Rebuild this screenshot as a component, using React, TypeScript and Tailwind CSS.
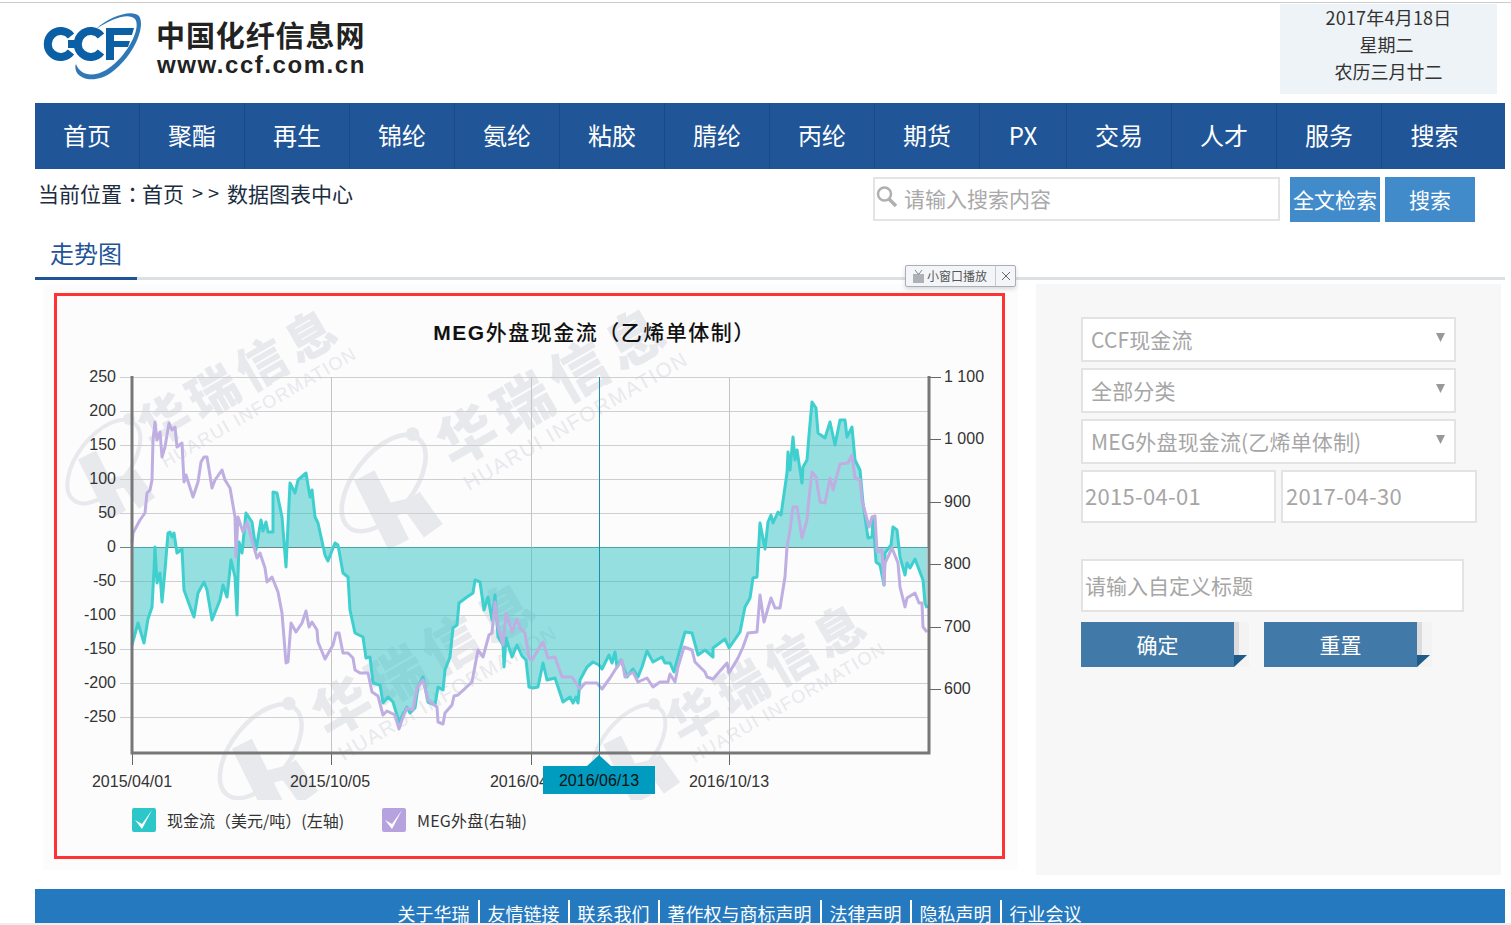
const TEAL = "132,645 138,623 144,643 148,619 152,607 154,570 155,547 157,583 160,573 162,602 165,570 168,533 170,532 172,537 174,533 177,553 182,549 184,590 192,612 194,617 198,593 204,582 207,590 212,620 220,600 223,585 227,597 231,560 235,577 237,615 238,577 239,542 242,553 246,513 252,522 256,550 261,520 263,531 266,522 268,532 273,532 273,492 277,493 282,517 286,567 290,483 295,493 298,480 306,473 310,497 312,490 315,517 318,523 325,555 328,561 335,543 338,545 343,573 348,577 350,610 355,633 363,637 366,658 370,657 373,683 380,685 383,703 388,697 393,702 399,722 407,707 410,713 415,708 418,687 423,677 428,702 435,705 438,687 443,690 445,670 450,657 453,628 457,625 459,603 467,597 473,593 475,580 480,582 484,610 488,597 492,620 495,595 498,637 503,645 504,667 506,638 512,657 517,645 522,656 526,660 529,687 533,688 538,687 543,663 547,680 555,678 563,702 570,697 573,703 576,697 578,703 580,680 587,667 593,662 599,665 602,669 609,655 612,663 615,652 617,667 621,660 627,677 633,669 638,677 642,667 647,651 653,662 662,657 665,663 670,663 674,672 678,657 685,632 692,633 698,655 705,650 713,657 713,648 725,639 729,648 740,632 745,607 750,598 753,578 757,577 760,523 765,549 768,522 771,515 773,523 778,512 781,515 787,473 788,452 790,470 793,437 795,460 797,450 802,483 803,467 807,460 809,435 812,402 816,408 818,433 825,438 830,422 835,445 840,420 845,420 847,437 852,427 855,460 860,470 863,503 868,538 872,537 873,517 876,562 880,565 884,585 885,553 891,545 893,527 897,530 900,557 905,575 907,563 910,568 915,559 923,580 925,603 927,608";
const PURPLE = "132,543 133,533 140,520 145,513 147,493 150,490 152,480 153,440 155,422 157,440 160,432 162,457 165,447 169,423 172,430 175,427 177,447 182,443 184,482 186,475 193,497 198,482 201,462 204,457 207,457 212,488 215,480 222,470 225,480 230,488 235,517 236,557 238,517 243,532 247,522 252,540 257,558 260,553 265,568 267,582 272,577 278,592 282,613 286,663 288,662 291,623 296,632 302,623 306,611 309,627 312,622 317,630 318,642 325,659 333,645 336,633 339,633 343,653 348,653 353,658 355,670 360,673 368,673 372,692 378,696 383,715 387,711 395,715 399,729 403,717 407,708 413,710 417,688 423,680 428,700 437,707 438,722 443,724 445,713 452,705 454,696 458,695 472,682 478,650 483,657 489,635 492,633 495,602 498,627 503,645 506,613 512,632 517,619 520,628 525,633 529,658 532,660 538,650 543,642 548,658 555,657 562,677 572,677 580,689 585,683 597,683 602,689 610,678 615,670 622,660 625,677 633,672 638,682 647,678 653,687 660,682 668,682 670,674 675,682 678,667 684,647 692,650 695,662 705,672 707,677 713,679 727,663 729,673 738,658 743,647 748,633 757,632 760,595 764,622 771,598 775,608 780,608 785,577 787,547 790,530 793,507 797,507 802,538 807,520 809,498 812,472 816,477 820,502 825,503 830,478 833,490 840,464 848,463 852,455 855,478 860,480 862,500 869,527 872,517 875,516 877,552 882,550 884,585 885,563 892,548 898,563 900,587 905,607 907,598 915,593 919,603 922,603 923,627 927,632";

const NAV = ["首页", "聚酯", "再生", "锦纶", "氨纶", "粘胶", "腈纶", "丙纶", "期货", "PX", "交易", "人才", "服务", "搜索"];
const LEFT = [250, 200, 150, 100, 50, 0, -50, -100, -150, -200, -250];
const RIGHT: [string, number][] = [["1 100", 377], ["1 000", 439], ["900", 502], ["800", 564], ["700", 627], ["600", 689]];
const XS: [string, number, number][] = [["2015/04/01", 132, 132], ["2015/10/05", 331, 330], ["2016/04/08", 531, 530], ["2016/10/13", 729, 729]];
const FOOT = ["关于华瑞", "友情链接", "联系我们", "著作权与商标声明", "法律声明", "隐私声明", "行业会议"];
const CJK = "'Noto Sans CJK SC', sans-serif";

function Watermark({ x, y, s = 1, tx = 38, ty = -20 }: { x: number; y: number; s?: number; tx?: number; ty?: number }) {
  return (
    <g transform={`translate(${x} ${y}) scale(${s})`} fill="#e8e9ed" stroke="none">
      <g fill="none" stroke="#e8e9ed">
        <ellipse cx="-3" cy="-2" rx="26" ry="49" transform="rotate(38)" strokeWidth="4" />
        <path d="M-18 -10 L12 50" strokeWidth="20" />
        <path d="M22 10 L42 38" strokeWidth="20" />
        <path d="M-4 22 L28 14" strokeWidth="12" />
      </g>
      <circle cx="24" cy="-46" r="6" />
      <g transform={`translate(${tx} ${ty}) rotate(-30)`}>
        <text x="0" y="18" fontSize="50" fontWeight="900" letterSpacing="6" style={{ fontFamily: CJK }}>华瑞信息</text>
        <text x="2" y="42" fontSize="18" letterSpacing="1.3" style={{ fontFamily: "'Liberation Sans', sans-serif" }}>HUARUI INFORMATION</text>
      </g>
    </g>
  );
}

function Chart() {
  return (
    <svg className="block w-[944px] h-[504px]" viewBox="57 296 944 504" style={{ fontFamily: "'Liberation Sans', sans-serif" }}>
      <Watermark x={105} y={465} ty={-32} />
      <Watermark x={385} y={487} s={1.15} tx={50} ty={-32} />
      <Watermark x={262} y={755} s={1.12} tx={50} ty={-30} />
      <Watermark x={630} y={750} tx={42} ty={-22} />
      {LEFT.map((v, i) => {
        const y = 377.5 + i * 34;
        return (
          <g key={v}>
            <line x1="120" x2="929" y1={y} y2={y} stroke={v === 0 ? "#5f8c8e" : "#cfcfcf"} />
            <text x="116" y={y + 4} textAnchor="end" fontSize="16" fill="#333">{v}</text>
          </g>
        );
      })}
      {XS.map(([t, x, lx]) => (
        <g key={t}>
          <line x1={x + 0.5} x2={x + 0.5} y1="377" y2="765" stroke={x === 132 ? "#777" : "#c4c4c4"} />
          <line x1={x + 0.5} x2={x + 0.5} y1="753" y2="765" stroke="#666" />
          <text x={lx} y="787" textAnchor="middle" fontSize="16" fill="#333">{t}</text>
        </g>
      ))}
      <polygon points={`132,547 ${TEAL} 927,547`} fill="#2fc2c4" fillOpacity="0.5" />
      <polyline points={TEAL} fill="none" stroke="#3fcfcf" strokeWidth="3" strokeLinejoin="round" />
      <polyline points={PURPLE} fill="none" stroke="#bfaee2" strokeWidth="3" strokeLinejoin="round" />
      <line x1="599.5" x2="599.5" y1="377" y2="756" stroke="#1a8fac" />
      <path d="M132 376 V753 H929 V376" fill="none" stroke="#777" strokeWidth="3" />
      {RIGHT.map(([t, y]) => (
        <g key={t}>
          <line x1="930" x2="941" y1={y + 0.5} y2={y + 0.5} stroke="#666" />
          <text x="944" y={y + 5} fontSize="16" fill="#333">{t}</text>
        </g>
      ))}
      <rect x="543" y="766" width="112" height="28" fill="#009cc0" />
      <polygon points="587,766 599,755 611,766" fill="#009cc0" />
      <text x="599" y="786" textAnchor="middle" fontSize="16" fill="#111">2016/06/13</text>
    </svg>
  );
}

function Check({ color }: { color: string }) {
  return (
    <svg className="w-6 h-6" viewBox="0 0 24 24">
      <rect width="24" height="24" rx="2" fill={color} />
      <path d="M3 12 L10 21 L20 2 L10 16 Z" fill="#fff" />
    </svg>
  );
}

function Select({ text }: { text: string }) {
  return (
    <div className="w-[375px] h-[45px] border-2 border-[#e3e3e3] bg-white flex items-center justify-between pl-2 pr-[9px]">
      <span className="text-[21px] tracking-[0.15px] text-[#a6a6a6]">{text}</span>
      <svg className="w-[9px] h-[9px] mb-1" viewBox="0 0 9 9"><path d="M0 0 H9 L4.5 9 Z" fill="#999" /></svg>
    </div>
  );
}

function FoldButton({ text }: { text: string }) {
  return (
    <div className="flex w-[168px] h-[45px] bg-[#f3f3f3]">
      <div className="w-[153px] bg-[#417aa8] text-white text-[21px] flex items-center justify-center">{text}</div>
      <div className="relative w-[15px] h-full">
        <div className="w-[5px] h-[33px] bg-[#dcdcdc]" />
        <svg className="absolute left-0 bottom-0 w-[13px] h-[12px]" viewBox="0 0 13 12"><path d="M0 0 H13 L0 12 Z" fill="#1f5a88" /></svg>
      </div>
    </div>
  );
}

export default function App() {
  return (
    <div className="relative w-[1511px] h-[925px] overflow-hidden bg-white" style={{ fontFamily: CJK }}>
      <div className="h-[3px] border-b border-[#cccccc]" />
      {/* header */}
      <div className="h-[100px] flex justify-between pr-[14px]">
        <div className="flex pl-[40px] pt-[9px]">
          <svg className="w-[105px] h-[72px]" viewBox="40 12 105 72">
            <path d="M71 36 A13 13 0 1 0 71 52" fill="none" stroke="#0a5fa5" strokeWidth="8" />
            <path d="M101 36 A13 13 0 1 0 101 52" fill="none" stroke="#0a5fa5" strokeWidth="8" />
            <path d="M68 40 H80 V48 H68 Z" fill="#0a5fa5" />
            <path d="M106 28 H134 L132 35 H114 V41 H130 L128 47 H114 V60 H106 Z" fill="#0a5fa5" />
            <path d="M96 29 C110 16 132 9 139 16 C146 26 134 56 112 72 C100 81 84 82 77 73 C75 69 75 66 76 64 C80 75 92 78 106 70 C126 58 142 28 135 19 C128 12 110 20 96 29 Z" fill="#2f78b8" />
          </svg>
          <div className="ml-[11px] pt-[6px] text-[#222]">
            <div className="text-[29px] leading-[33px] font-semibold tracking-[0.9px] whitespace-nowrap">中国化纤信息网</div>
            <div className="ml-px text-[24px] leading-[27px] font-bold tracking-[1.55px] whitespace-nowrap" style={{ fontFamily: "'Liberation Sans', sans-serif" }}>www.ccf.com.cn</div>
          </div>
        </div>
        <div className="w-[217px] h-[90px] mt-[1px] bg-[#eef3f7] text-[18px] leading-[27px] text-[#333] text-center">
          <div className="tracking-[0.2px]">2017年4月18日</div>
          <div className="pr-[4px]">星期二</div>
          <div>农历三月廿二</div>
        </div>
      </div>
      {/* nav */}
      <div className="ml-[35px] w-[1470px] h-[66px] bg-[#205597] flex">
        {NAV.map((n, i) => (
          <div key={n + i} className={`${n === "PX" ? "w-[87px]" : "w-[105px]"} ${i === NAV.length - 1 ? "" : "border-r border-[#1a4a85]"} flex items-center justify-center pb-[2px] text-white text-[24px]`}>{n}</div>
        ))}
      </div>
      {/* breadcrumb & search */}
      <div className="h-[61px] pl-[38px] pt-[8px] flex">
        <div className="w-[835px] -mt-[2px] text-[21px] leading-[36px] text-[#1b2d3f] whitespace-nowrap flex">
          <span>当前位置</span>
          <span className="w-[20px] text-center" style={{ fontFamily: "'Noto Sans CJK TC', sans-serif" }}>：</span>
          <span>首页</span>
          <span className="w-[43px] pl-[8px] flex text-[20px]">
            <span className="w-[16px]">&gt;</span>
            <span className="w-[16px]">&gt;</span>
          </span>
          <span>数据图表中心</span>
        </div>
        <div className="w-[407px] h-[44px] border-2 border-[#e4e4e4] flex items-center pl-[1px]">
          <svg className="w-[22px] h-[24px] mb-1" viewBox="0 0 22 24" fill="none" stroke="#b0b0b0"><circle cx="8.5" cy="9" r="6.5" strokeWidth="2.5" /><path d="M13 14 L20 21" strokeWidth="3.5" /></svg>
          <span className="ml-[6px] text-[21px] text-[#a9a9a9]">请输入搜索内容</span>
        </div>
        <div className="ml-[10px] w-[90px] h-[45px] bg-[#418bca] text-white text-[21px] flex items-center justify-center whitespace-nowrap">全文检索</div>
        <div className="ml-[5px] w-[90px] h-[45px] bg-[#418bca] text-white text-[21px] flex items-center justify-center">搜索</div>
      </div>
      {/* tab */}
      <div className="ml-[35px] w-[1470px] h-[50px] border-b-[3px] border-[#dde0e3] flex">
        <div className="w-[102px] h-[50px] border-b-[3px] border-[#1f5597] text-center text-[24px] leading-[46px] text-[#1f5597]">走势图</div>
      </div>
      {/* main */}
      <div className="flex pl-[43px] pt-[4px]">
        <div className="w-[975px] h-[586px] bg-[#fcfcfc] pl-[11px] pt-[9px]">
          <div className="w-[951px] h-[566px] border-[3px] border-[#ff3333] bg-[#fcfcfc] relative">
            <div className="absolute left-[130px] right-0 top-[21px] text-center text-[21px] leading-[28px] font-medium text-[#111] tracking-[1.5px]">
              <span className="font-bold" style={{ fontFamily: "'Liberation Sans', sans-serif" }}>MEG</span>外盘现金流（乙烯单体制）
            </div>
            <Chart />
            <div className="flex items-center h-6 mt-[8px] pl-[75px] text-[16px] text-[#333]">
              <Check color="#2ec7c9" />
              <span className="ml-[11px] w-[215px] whitespace-nowrap">现金流（美元/吨）(左轴)</span>
              <Check color="#b6a2de" />
              <span className="ml-[11px] whitespace-nowrap tracking-[0.2px]">MEG外盘(右轴)</span>
            </div>
          </div>
        </div>
        <div className="ml-[18px] w-[465px] h-[591px] bg-[#f7f7f7] pl-[45px] pt-[33px]">
          <div className="flex flex-col gap-[6px]">
            <Select text="CCF现金流" />
            <Select text="全部分类" />
            <Select text="MEG外盘现金流(乙烯单体制)" />
          </div>
          <div className="flex gap-[5px] mt-[6px]">
            <div className="w-[195px] h-[53px] border-2 border-[#e3e3e3] bg-white flex items-center pl-[2px] pb-[2px] text-[22px] tracking-[0.3px] text-[#a6a6a6]">2015-04-01</div>
            <div className="w-[196px] h-[53px] border-2 border-[#e3e3e3] bg-white flex items-center pl-[3px] pb-[2px] text-[22px] tracking-[0.3px] text-[#a6a6a6]">2017-04-30</div>
          </div>
          <div className="w-[383px] h-[53px] mt-[36px] border-2 border-[#e3e3e3] bg-white flex items-center pl-[2px] text-[21px] text-[#a6a6a6]">请输入自定义标题</div>
          <div className="flex gap-[15px] mt-[10px]">
            <FoldButton text="确定" />
            <FoldButton text="重置" />
          </div>
        </div>
      </div>
      {/* footer */}
      <div className="absolute left-[35px] top-[889px] w-[1470px] h-[34px] bg-[#2479bf] overflow-hidden flex justify-center pt-[11px] pr-[61px] text-white text-[18px] leading-[26px]">
        {FOOT.map((f, i) => (
          <span key={f} className={`whitespace-nowrap ${i === 0 ? "" : "ml-[8px] pl-[8px] border-l-2 border-white"}`}>{f}</span>
        ))}
      </div>
      <div className="absolute left-0 bottom-0 w-full h-[2px] bg-[#eeeeee]" />
      {/* small window pop */}
      <div className="absolute left-[905px] top-[265px] w-[111px] h-[22px] flex items-center border border-[#a9aeb8] rounded-[2px] bg-[#f3f5f8] shadow-[0_2px_4px_rgba(0,0,0,0.15)] text-[12px] text-[#555]">
        <svg className="ml-[6px] w-[13px] h-[13px]" viewBox="0 0 13 13" fill="#aeb2b8"><rect x="1" y="4" width="11" height="9" /><path d="M3 0 L6 4 H7 L10 0" fill="none" stroke="#888" /></svg>
        <span className="ml-[2px] w-[68px] whitespace-nowrap overflow-hidden">小窗口播放</span>
        <span className="flex-1 h-full border-l border-[#c5c9d0] flex items-center justify-center">
          <svg className="w-[10px] h-[10px]" viewBox="0 0 10 10" stroke="#666"><path d="M1 1 L9 9 M9 1 L1 9" /></svg>
        </span>
      </div>
    </div>
  );
}
